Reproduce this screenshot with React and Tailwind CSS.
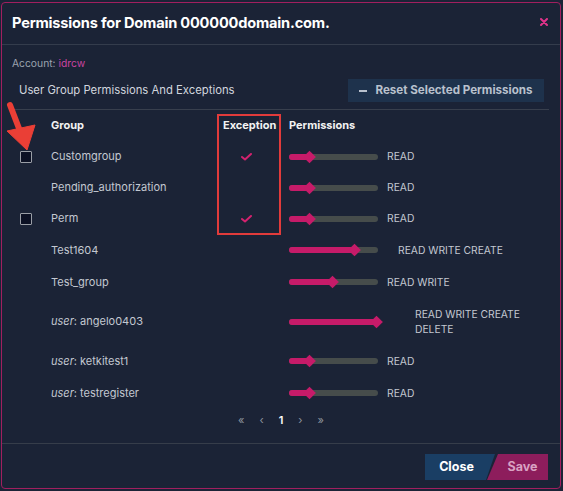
import React from "react";

const rows = [
  { name: "Customgroup", box: true, exc: true, pct: "25%", label: "READ", ml: "ml-[9px]", h: "h-[31px]" },
  { name: "Pending_authorization", pct: "25%", label: "READ", ml: "ml-[9px]", h: "h-[31px]" },
  { name: "Perm", box: true, exc: true, pct: "25%", label: "READ", ml: "ml-[9px]", h: "h-[31px]" },
  { name: "Test1604", pct: "75%", label: "READ WRITE CREATE", ml: "ml-[20px]", h: "h-[32px]" },
  { name: "Test_group", pct: "50%", label: "READ WRITE", ml: "ml-[9px]", h: "h-[32px]" },
  { name: "angelo0403", user: true, pct: "100%", label: "READ WRITE CREATE", label2: "DELETE", ml: "ml-[37px]", h: "h-[47px]" },
  { name: "ketkitest1", user: true, pct: "25%", label: "READ", ml: "ml-[9px]", h: "h-[32px]" },
  { name: "testregister", user: true, pct: "25%", label: "READ", ml: "ml-[9px]", h: "h-[32px]" },
];

const Slider = ({ pct }) => (
  <div className="relative w-[89px] h-[6px] rounded-full bg-[#464c4b]">
    <div className="absolute left-0 top-0 h-full rounded-l-full bg-[#c61b69]" style={{ width: pct }} />
    <div
      className="absolute top-1/2 w-[9px] h-[9px] bg-[#c61b69] rotate-45 -translate-y-1/2 -translate-x-[6px]"
      style={{ left: pct }}
    />
  </div>
);

const Check = () => (
  <svg width="11" height="8" viewBox="0 0 11 8">
    <path d="M1 4 L4 6.5 L10 1" fill="none" stroke="#d4226f" strokeWidth="2" strokeLinecap="round" strokeLinejoin="round" />
  </svg>
);

export default function App() {
  return (
    <div className="w-[563px] h-[491px] bg-[#1b2336] pt-[2px] pl-[1px] overflow-hidden" style={{ fontFamily: "Inter, 'Noto Sans', sans-serif" }}>
      <div className="relative w-[560px] h-[487px] rounded-[4px] border border-[#a11f5f] bg-[#1b2336] flex flex-col">
        {/* header */}
        <div className="h-[42px] flex items-center justify-between pl-[10px] pr-[12px] border-b border-[#343c4c]">
          <h1 className="text-[14.6px] font-bold text-white tracking-[-0.2px]">Permissions for Domain 000000domain.com.</h1>
          <svg width="8" height="8" viewBox="0 0 8 8" className="mb-[4px]">
            <path d="M1 1 L7 7 M7 1 L1 7" stroke="#e0338a" strokeWidth="2" strokeLinecap="round" />
          </svg>
        </div>

        {/* account + title row */}
        <div className="pt-[11px] pl-[10px] text-[10.3px] leading-[14px] text-[#9ca3af]">
          Account: <span className="text-[#c843a0]">idrcw</span>
        </div>
        <div className="mt-[9px] flex items-center justify-between pl-[17px] pr-[16px]">
          <span className="text-[11.3px] text-[#d2d6de]">User Group Permissions And Exceptions</span>
          <button className="w-[196px] h-[23px] bg-[#1e324c] flex items-center justify-center gap-[8px] text-[11.6px] font-bold text-[#b9c1cd]">
            <span className="w-[8px] h-[2px] bg-[#b9c1cd]" />
            Reset Selected Permissions
          </button>
        </div>
        <div className="mt-[7px] ml-[8px] mr-[11px] h-px bg-[#383f4d]" />

        {/* table */}
        <div className="text-[11px]">
          <div className="h-[31px] grid grid-cols-[49px_167px_71px_1fr] items-center font-bold text-[#f2f2f2]">
            <div />
            <div>Group</div>
            <div className="pl-[5px]">Exception</div>
            <div>Permissions</div>
          </div>
          {rows.map((r) => (
            <div key={r.name} className={`${r.h} grid grid-cols-[49px_167px_71px_1fr] items-center text-[#c3c8d1]`}>
              <div className="pl-[18px]">
                {r.box && <div className="w-[12px] h-[12px] border-[1.5px] border-[#9a9ea6] bg-[#0c1124] rounded-[1px]" />}
              </div>
              <div>
                {r.user && <i>user</i>}
                {r.user && ": "}
                {r.name}
              </div>
              <div className="pl-[23px] flex">{r.exc && <Check />}</div>
              <div className="flex items-center">
                <Slider pct={r.pct} />
                <div className={`${r.ml} text-[10.3px] leading-[15px]`}>
                  {r.label}
                  {r.label2 && <br />}
                  {r.label2}
                </div>
              </div>
            </div>
          ))}

          {/* pagination */}
          <div className="h-[22px] flex items-center justify-center gap-[15px] text-[#8d939d]">
            <span>«</span>
            <span>‹</span>
            <span className="text-white font-semibold">1</span>
            <span>›</span>
            <span>»</span>
          </div>
        </div>

        {/* footer */}
        <div className="mt-[12px] border-t border-[#363d4a] flex justify-end pt-[10px] pr-[12px]">
          <button className="w-[70px] h-[26px] bg-[#1a3e64] text-white text-[12.5px] font-bold pr-[7px] [clip-path:polygon(0_0,100%_0,calc(100%-9px)_100%,0_100%)]">
            Close
          </button>
          <button className="-ml-[8px] w-[61px] h-[26px] bg-[#8d1d5c] text-[#d9a2c3] text-[12.5px] font-bold pl-[10px] [clip-path:polygon(11px_0,100%_0,100%_100%,0_100%)]">
            Save
          </button>
        </div>

        {/* annotations */}
        <div className="absolute left-[215px] top-[111px] w-[64px] h-[121px] border-2 border-[#e23b3b]" />
        <svg className="absolute left-[-2px] top-[97px]" width="40" height="52" viewBox="0 0 40 52">
          <path d="M10 5 L20 31" stroke="#ea3f36" strokeWidth="6" strokeLinecap="round" />
          <path d="M7 31 L35 25 L27 50 Z" fill="#ea3f36" strokeLinejoin="round" stroke="#ea3f36" strokeWidth="1" />
        </svg>
      </div>
    </div>
  );
}
